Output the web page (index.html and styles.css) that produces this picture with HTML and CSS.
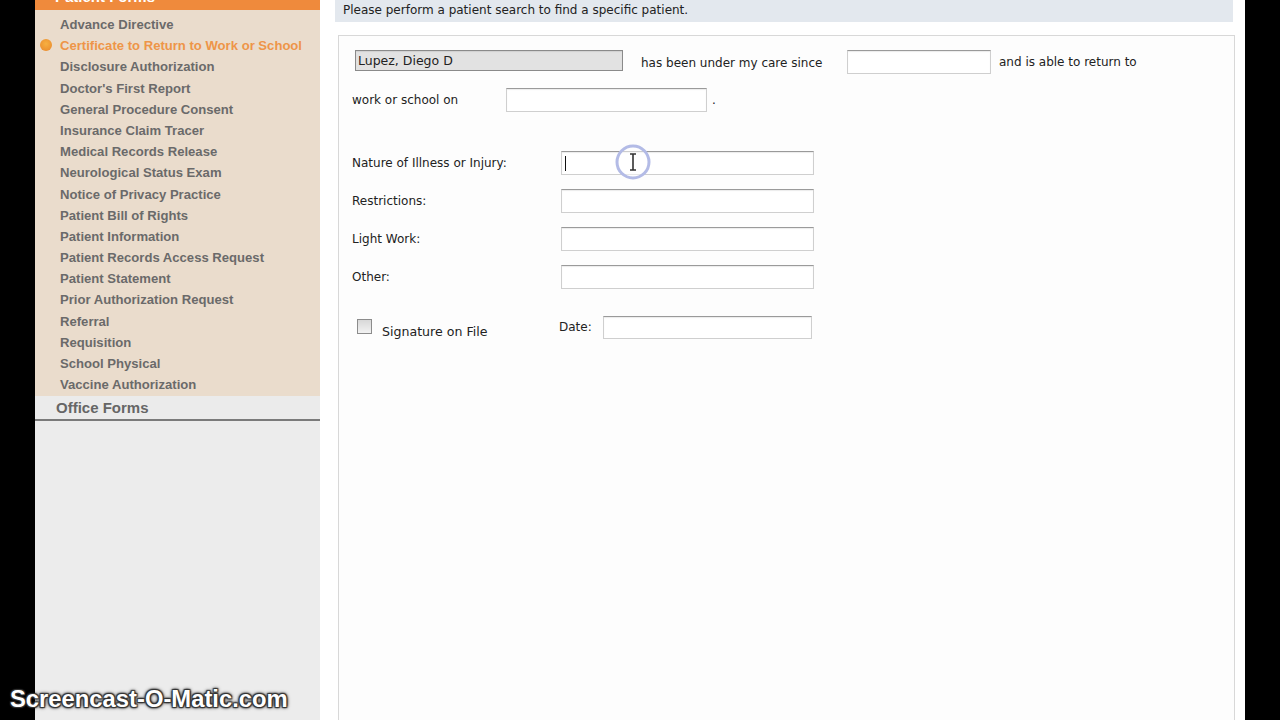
FILE: index.html
```html
<!DOCTYPE html>
<html>
<head>
<meta charset="utf-8">
<title>Certificate to Return to Work or School</title>
<link rel="stylesheet" href="styles.css">
</head>
<body>
<div class="page">
  <aside class="sidebar">
    <div class="sb-head">Patient Forms</div>
    <ul class="forms">
      <li>Advance Directive</li>
      <li class="current">Certificate to Return to Work or School</li>
      <li>Disclosure Authorization</li>
      <li>Doctor's First Report</li>
      <li>General Procedure Consent</li>
      <li>Insurance Claim Tracer</li>
      <li>Medical Records Release</li>
      <li>Neurological Status Exam</li>
      <li>Notice of Privacy Practice</li>
      <li>Patient Bill of Rights</li>
      <li>Patient Information</li>
      <li>Patient Records Access Request</li>
      <li>Patient Statement</li>
      <li>Prior Authorization Request</li>
      <li>Referral</li>
      <li>Requisition</li>
      <li>School Physical</li>
      <li>Vaccine Authorization</li>
    </ul>
    <div class="office">Office Forms</div>
  </aside>
  <main class="main">
    <div class="notice">Please perform a patient search to find a specific patient.</div>
    <div class="panel">
      <div class="row-one">
        <div class="field patient">Lupez, Diego D</div>
        <span class="txt care">has been under my care since</span>
        <div class="field since"></div>
        <span class="txt able">and is able to return to</span>
      </div>
      <div class="row-two">
        <span class="txt wos">work or school on</span>
        <div class="field on"></div>
        <span class="txt dot">.</span>
      </div>
      <div class="grid">
        <span class="txt">Nature of Illness or Injury:</span>
        <div class="field wide focus"><span class="caret"></span></div>
        <span class="txt">Restrictions:</span>
        <div class="field wide"></div>
        <span class="txt">Light Work:</span>
        <div class="field wide"></div>
        <span class="txt">Other:</span>
        <div class="field wide"></div>
      </div>
      <div class="sig-row">
        <span class="check"></span>
        <span class="txt sig">Signature on File</span>
        <span class="txt date-lbl">Date:</span>
        <div class="field date"></div>
      </div>
    </div>
  </main>
</div>
<svg class="cursor-ring" width="40" height="40" viewBox="0 0 40 40">
  <circle cx="20" cy="20" r="16" fill="rgba(255,255,255,0.5)" stroke="#b3bbe6" stroke-width="3"/>
  <path d="M17 12 H23 M20 12 V28 M17 28 H23" stroke="#333" stroke-width="1.6" fill="none"/>
</svg>
<div class="watermark">Screencast-O-Matic.com</div>
</body>
</html>
```
FILE: styles.css
```css
html, body {
  margin: 0;
  padding: 0;
  height: 720px;
  overflow: hidden;
  background: #000;
}
body {
  font-family: "Liberation Sans", Arial, sans-serif;
}
.page {
  margin-left: 35px;
  width: 1210px;
  height: 720px;
  background: #fff;
  display: flex;
}
.sidebar {
  width: 285px;
  flex: none;
  background: #ececec;
  display: flex;
  flex-direction: column;
}
.sb-head {
  margin-top: -18px;
  height: 28px;
  line-height: 30px;
  background: #ef8a3c;
  color: #fff;
  font-weight: bold;
  font-size: 15px;
  padding-left: 20px;
  box-sizing: border-box;
  overflow: hidden;
}
.forms {
  list-style: none;
  margin: 0;
  padding: 4px 0 1px 0;
  background: #eadccc;
}
.forms li {
  height: 21.2px;
  line-height: 21.2px;
  padding-left: 25px;
  font-size: 13.1px;
  font-weight: bold;
  color: #6a6a6a;
  position: relative;
  white-space: nowrap;
}
.forms li.current {
  color: #ee9548;
}
.forms li.current::before {
  content: "";
  position: absolute;
  left: 5px;
  top: 4px;
  width: 12px;
  height: 12px;
  border-radius: 50%;
  background: radial-gradient(circle at 50% 40%, #f7b041, #e8862b);
}
.office {
  height: 23px;
  line-height: 23px;
  background: #ebebeb;
  border-bottom: 2px solid #7a7a7a;
  padding-left: 21px;
  font-size: 15px;
  font-weight: bold;
  color: #666;
}
.main {
  flex: 1;
  padding-left: 15px;
  padding-right: 10px;
  display: flex;
  flex-direction: column;
}
.notice {
  height: 22px;
  line-height: 20px;
  background: #e3e8ee;
  margin-right: 2px;
  padding-left: 8px;
  font-family: "DejaVu Sans", Verdana, sans-serif;
  font-size: 12px;
  color: #222;
  box-sizing: border-box;
}
.panel {
  margin-top: 13px;
  margin-left: 3px;
  flex: 1;
  border: 1px solid #d8d8d8;
  border-bottom: none;
  background: #fdfdfd;
  padding: 14px 0 0 13px;
}
.txt {
  font-family: "DejaVu Sans", Verdana, sans-serif;
  font-size: 12px;
  color: #222;
  white-space: nowrap;
}
.field {
  box-sizing: border-box;
  height: 24px;
  background: #fff;
  border: 1px solid #cfcfcf;
  border-top-color: #9a9a9a;
  box-shadow: inset 0 1px 1px rgba(0,0,0,0.08);
}
.row-one {
  display: flex;
  align-items: center;
  height: 24px;
}
.patient {
  margin-left: 3px;
  align-self: flex-start;
  width: 268px;
  height: 21px;
  background: #e2e2e2;
  border: 1px solid #8a8a8a;
  font-family: "DejaVu Sans", Verdana, sans-serif;
  font-size: 12.5px;
  line-height: 19px;
  padding-left: 2px;
  color: #222;
}
.care {
  margin-left: 18px;
  margin-top: 2px;
  width: 206px;
}
.since {
  width: 144px;
}
.able {
  margin-left: 8px;
}
.row-two {
  display: flex;
  align-items: center;
  margin-top: 14px;
  height: 24px;
}
.wos {
  width: 154px;
}
.on {
  width: 201px;
}
.dot {
  margin-left: 5px;
}
.grid {
  display: grid;
  grid-template-columns: 209px 253px;
  grid-auto-rows: 24px;
  row-gap: 14px;
  align-items: center;
  margin-top: 39px;
}
.focus {
  position: relative;
}
.caret {
  position: absolute;
  left: 3px;
  top: 4px;
  width: 1px;
  height: 15px;
  background: #111;
}
.sig-row {
  display: flex;
  align-items: center;
  margin-top: 26px;
  height: 24px;
}
.check {
  margin-left: 5px;
  width: 15px;
  height: 15px;
  border: 1px solid #8c8c8c;
  background: linear-gradient(#d8d8d8, #f2f2f2);
  box-sizing: border-box;
  align-self: flex-start;
  margin-top: 4px;
}
.sig {
  margin-left: 10px;
  margin-top: 8px;
  width: 177px;
  font-size: 12.6px;
}
.date-lbl {
  width: 44px;
}
.date {
  width: 209px;
  height: 23px;
}
.cursor-ring {
  position: absolute;
  left: 613px;
  top: 142px;
}
.watermark {
  position: absolute;
  left: 10px;
  top: 685px;
  font-size: 23.8px;
  font-weight: bold;
  color: #fff;
  text-shadow: -1px -1px 1px #333, 1px -1px 1px #333, -1px 1px 1px #333, 1px 1px 1px #333, 0 0 3px #000, 0 0 4px #000;
}
```
